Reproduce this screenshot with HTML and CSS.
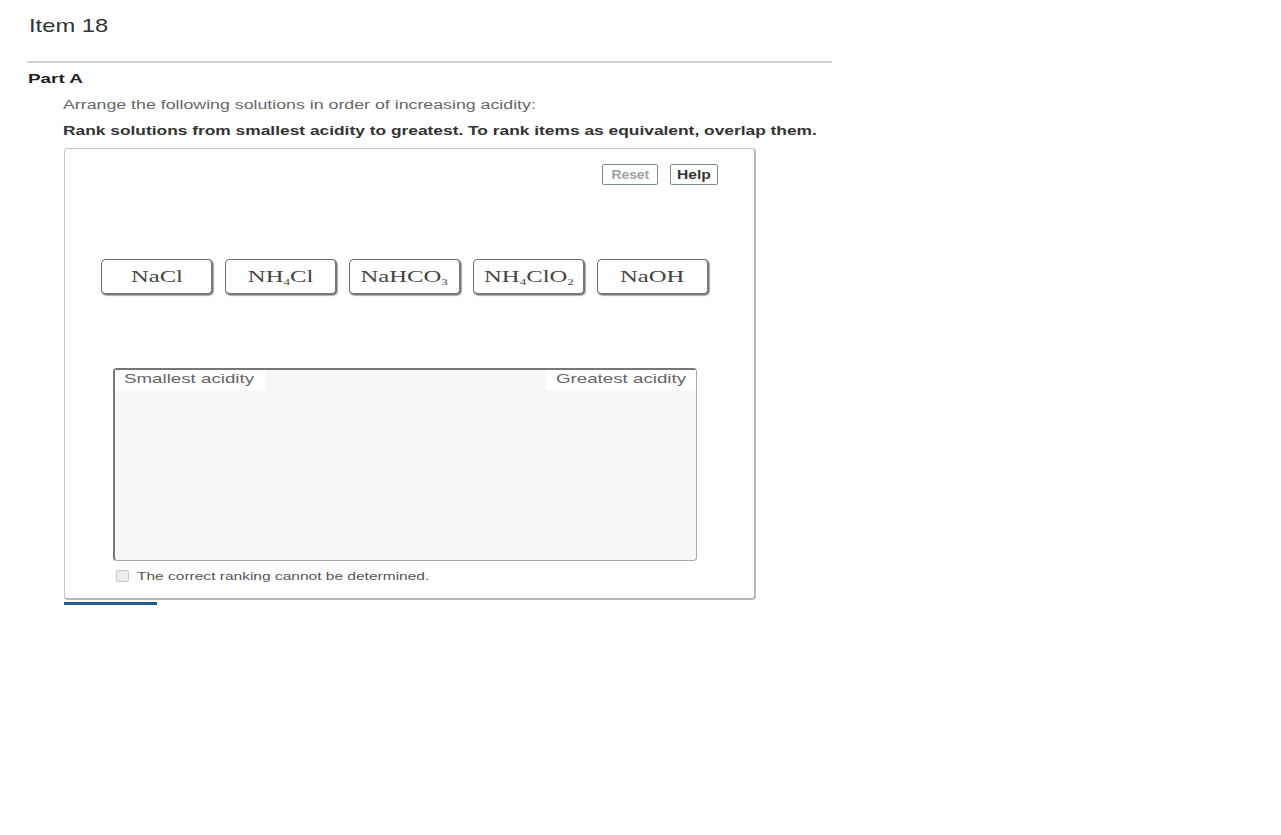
FILE: index.html
```html
<!DOCTYPE html>
<html>
<head>
<meta charset="utf-8">
<link rel="stylesheet" href="styles.css">
</head>
<body>
<div class="page">
  <h1 class="item-title"><span class="sx sx-title">Item 18</span></h1>
  <hr class="rule">
  <h2 class="part-title"><span class="sx sx-part">Part A</span></h2>
  <div class="part-body">
    <p class="prompt"><span class="sx sx-prompt">Arrange the following solutions in order of increasing acidity:</span></p>
    <p class="instr"><span class="sx sx-instr">Rank solutions from smallest acidity to greatest. To rank items as equivalent, overlap them.</span></p>
    <div class="widget">
      <div class="tools">
        <span class="btn btn-reset"><span class="sx sx-reset">Reset</span></span>
        <span class="btn btn-help"><span class="sx sx-help">Help</span></span>
      </div>
      <div class="tiles">
        <div class="tile"><span class="sx sx-tile">NaCl</span></div>
        <div class="tile"><span class="sx sx-tile">NH<sub>4</sub>Cl</span></div>
        <div class="tile"><span class="sx sx-tile">NaHCO<sub>3</sub></span></div>
        <div class="tile"><span class="sx sx-tile">NH<sub>4</sub>ClO<sub>2</sub></span></div>
        <div class="tile"><span class="sx sx-tile">NaOH</span></div>
      </div>
      <div class="rank">
        <div class="rank-labels">
          <span class="rank-label"><span class="sx sx-label">Smallest acidity</span></span>
          <span class="rank-label"><span class="sx sx-label">Greatest acidity</span></span>
        </div>
      </div>
      <label class="check"><span class="box"></span><span class="sx sx-check">The correct ranking cannot be determined.</span></label>
    </div>
    <div class="underline"></div>
  </div>
</div>
</body>
</html>
```
FILE: styles.css
```css
html, body { margin: 0; padding: 0; background: #fff; }
body { font-family: "Liberation Sans", Arial, sans-serif; color: #333; }
.page { padding: 14px 0 0 27px; width: 805px; }
.sx { display: inline-block; white-space: nowrap; transform-origin: left center; }
.sx-title { transform: scaleX(1.25); }
.sx-part { transform: scaleX(1.45); }
.sx-prompt { transform: scaleX(1.48); }
.sx-instr { transform: scaleX(1.335); }
.sx-reset { transform: scaleX(1.15); transform-origin: center; }
.sx-help { transform: scaleX(1.3); transform-origin: center; }
.sx-tile { transform: scaleX(1.45); transform-origin: center; }
.sx-label { transform: scaleX(1.44); }
.sx-check { transform: scaleX(1.41); }

.item-title { margin: 0 0 0 2px; font-size: 19px; font-weight: normal; color: #333; line-height: 24px; }
.rule { margin: 23px 0 0 0; border: 0; height: 2px; background: #d4d4d4; }
.part-title { margin: 8px 0 0 1px; font-size: 13px; font-weight: bold; color: #222; line-height: 16px; }
.part-body { padding-left: 36px; }
.prompt { margin: 11px 0 0 0; font-size: 12px; color: #666; line-height: 14px; }
.instr { margin: 11px 0 0 0; font-size: 13px; font-weight: bold; color: #333; line-height: 16px; }
.widget { margin-top: 9px; margin-left: 1px; width: 692px; height: 452px; border: 1px solid #c4c4c4; border-right: 2px solid #b8b8b8; border-bottom: 2px solid #b8b8b8; border-radius: 4px; box-sizing: border-box; padding: 15px 0 0 0; display: flex; flex-direction: column; }
.tools { display: flex; justify-content: flex-end; gap: 12px; padding-right: 36px; }
.btn { display: flex; align-items: center; justify-content: center; height: 21px; box-sizing: border-box; font-size: 12px; font-weight: bold; border: 1px solid #7a8c94; border-radius: 2px; box-shadow: inset 0 0 0 1px #fff; background: #fff; }
.btn-reset { color: #a0a0a0; width: 56px; }
.btn-help { color: #333; width: 48px; }
.tiles { display: flex; gap: 12px; margin-top: 74px; padding-left: 36px; }
.tile { width: 112px; height: 36px; box-sizing: border-box; border: 1px solid #6e6e6e; border-right: 2px solid #777; border-bottom: 2px solid #777; border-radius: 5px; box-shadow: 1px 1px 1px #aaa; font-family: "Liberation Serif", "Times New Roman", serif; font-size: 17px; color: #444; display: flex; align-items: center; justify-content: center; background: #fff; }
.tile sub { font-size: 9px; vertical-align: -3px; line-height: 0; }
.rank { margin: 73px 0 0 48px; width: 584px; height: 193px; box-sizing: border-box; background: #f7f7f7; border: 1px solid #a8a8b4; border-top: 2px solid #777; border-left: 2px solid #777; border-radius: 4px; }
.rank-labels { display: flex; justify-content: space-between; }
.rank-label { display: block; width: 150px; height: 20px; box-sizing: border-box; background: #fff; font-size: 13px; color: #666; line-height: 18px; padding-left: 9px; }
.rank-label + .rank-label { padding-left: 10px; }
.check { display: flex; align-items: center; margin: 8px 0 0 51px; font-size: 11px; color: #555; height: 14px; }
.box { width: 13px; height: 12px; box-sizing: border-box; border: 1px solid #c8c8c8; border-radius: 2px; background: #ececec; margin-right: 8px; flex: none; }
.underline { width: 93px; height: 3px; background: #1f5c97; margin-top: 2px; margin-left: 1px; }
```
